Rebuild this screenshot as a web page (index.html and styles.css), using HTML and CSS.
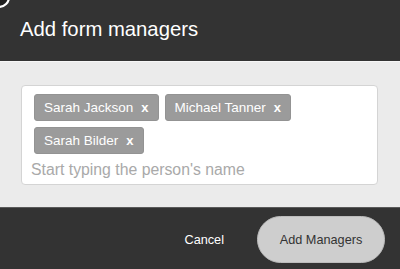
FILE: index.html
```html
<!DOCTYPE html>
<html lang="en">
<head>
    <meta charset="UTF-8">
    <meta name="viewport" content="width=device-width, initial-scale=1.0">
    <title>Add form managers</title>
    <link rel="stylesheet" href="styles.css">
</head>
<body>

    <div class="modal">
        <!-- close badge, mostly off the edge of the window -->
        <svg class="close-badge" width="14" height="11" viewBox="0 0 14 11">
            <circle cx="-1" cy="-3" r="10" fill="#1e1e1e" stroke="#ffffff" stroke-width="2.2"/>
        </svg>

        <header class="modal-header">
            <h1 class="modal-title">Add form managers</h1>
        </header>

        <div class="modal-body">
            <div class="token-field">
                <span class="token">Sarah Jackson<span class="token-remove">x</span></span>
                <span class="token">Michael Tanner<span class="token-remove">x</span></span>
                <span class="token">Sarah Bilder<span class="token-remove">x</span></span>
                <input class="token-input" type="text" placeholder="Start typing the person's name">
            </div>
        </div>

        <footer class="modal-footer">
            <button class="btn-cancel" type="button">Cancel</button>
            <button class="btn-primary" type="button">Add Managers</button>
        </footer>
    </div>

</body>
</html>
```

FILE: styles.css
```css
:root {
    --dark-bg: #333333;
    --body-bg: #ebebeb;
    --token-bg: #9b9b9b;
    --text-light: #ffffff;
    --text-dark: #333333;
    --placeholder: #a9a9a9;
}

* {
    margin: 0;
    padding: 0;
    box-sizing: border-box;
    font-family: "Liberation Sans", Arial, sans-serif;
}

body {
    background-color: var(--dark-bg);
}

.modal {
    position: relative;
    width: 400px;
    height: 269px;
    overflow: hidden;
    display: flex;
    flex-direction: column;
}

.close-badge {
    position: absolute;
    top: 0;
    left: 0;
}

.modal-header {
    background-color: var(--dark-bg);
    height: 61px;
    padding: 18px 20px 20px;
}

.modal-title {
    color: var(--text-light);
    font-size: 20.3px;
    font-weight: normal;
    line-height: 23px;
}

.modal-body {
    background-color: var(--body-bg);
    border-top: 1px solid #f6f6f6;
    padding: 23px 22px 22px 21px;
}

.token-field {
    background-color: #ffffff;
    border: 1px solid #d4d4d4;
    border-radius: 4px;
    height: 100px;
    padding: 5px 9px 2px;
    display: flex;
    flex-wrap: wrap;
    align-content: flex-start;
}

.token {
    display: inline-flex;
    align-items: center;
    height: 27px;
    margin: 3px;
    padding: 0 9px;
    background-color: var(--token-bg);
    border: 1px solid #939393;
    border-radius: 3px;
    color: var(--text-light);
    font-size: 13.5px;
}

.token-remove {
    margin-left: 8px;
    font-size: 13px;
    font-weight: bold;
}

.token-input {
    width: 100%;
    height: 24px;
    margin-top: 1px;
    border: none;
    outline: none;
    background: transparent;
    font-size: 15.8px;
    color: var(--text-dark);
}

.token-input::placeholder {
    color: var(--placeholder);
}

.modal-footer {
    flex: 1;
    background-color: var(--dark-bg);
    border-top: 1px solid #5a5a5a;
    display: flex;
    justify-content: flex-end;
    align-items: flex-start;
    padding: 8px 15px 0 0;
}

.btn-cancel {
    background: none;
    border: none;
    color: var(--text-light);
    font-size: 12.7px;
    height: 47px;
    margin-right: 33px;
    cursor: pointer;
}

.btn-primary {
    width: 128px;
    height: 47px;
    background-color: #cecece;
    border: 1px solid #bcbcbc;
    border-radius: 24px;
    color: var(--text-dark);
    font-size: 12.7px;
    cursor: pointer;
}
```
